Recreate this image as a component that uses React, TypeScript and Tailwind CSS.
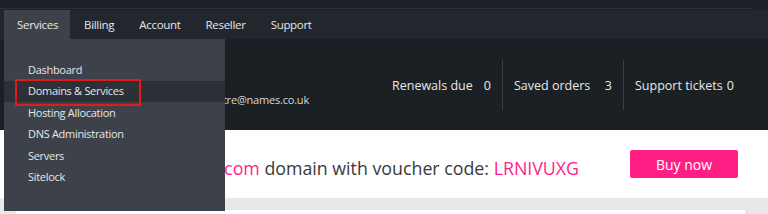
import React from "react";

export default function App() {
  const menu = [
    "Dashboard",
    "Domains & Services",
    "Hosting Allocation",
    "DNS Administration",
    "Servers",
    "Sitelock",
  ];
  const nav = ["Billing", "Account", "Reseller", "Support"];
  return (
    <div className="relative w-full h-[214px] overflow-hidden bg-[#e8e8e8] font-['Open_Sans',sans-serif]">
      {/* top strip */}
      <div className="h-[10px] bg-[#1e2228]">
        <div className="h-[9px] mr-[16px] border-b border-[#2a2f36]" />
      </div>
      {/* nav */}
      <div className="h-[29px] bg-[#22272e] flex pl-[4px] text-[11.5px] tracking-[-0.3px] text-[#e6e6e6]">
        <div className="w-[66px] bg-[#3d424a] flex items-center pl-[13px]">Services</div>
        <div className="flex items-center gap-[25px] pl-[14px]">
          {nav.map((n) => (
            <span key={n}>{n}</span>
          ))}
        </div>
      </div>
      {/* dark main */}
      <div className="h-[91px] bg-[#1b2024] flex items-center">
        <div className="w-[309px] pt-[32px] text-right text-[11px] tracking-[-0.2px] text-[#d8d8d8]">
          webcentre@names.co.uk
        </div>
        <div className="ml-auto mr-[23px] flex h-[50px] text-[12.5px] text-[#e8e8e8]">
          <div className="w-[121px] flex items-center justify-between px-[11px] pt-[3px]">
            <span>Renewals due</span>
            <span>0</span>
          </div>
          <div className="w-[121px] flex items-center justify-between px-[11px] pt-[3px] border-l border-[#3a3f45]">
            <span>Saved orders</span>
            <span>3</span>
          </div>
          <div className="w-[122px] flex items-center justify-between px-[11px] pt-[3px] border-l border-[#3a3f45]">
            <span>Support tickets</span>
            <span>0</span>
          </div>
        </div>
      </div>
      {/* banner */}
      <div className="h-[68px] bg-white flex items-center justify-end pr-[30px]">
        <div className="text-[17.8px] text-[#3a3a3a] pt-[9px] whitespace-nowrap">
          Register a .<span className="text-[#ff1f8a]">com</span> domain with voucher code:{" "}
          <span className="text-[#ff1f8a]">LRNIVUXG</span>
        </div>
        <button className="ml-[51px] w-[108px] h-[28px] bg-[#ff1f84] rounded-[2px] text-white text-[14px]">
          Buy now
        </button>
      </div>
      {/* gray area */}
      <div className="h-[16px] bg-[#e8e8e8] pt-[12px] pl-[16px] pr-[23px]">
        <div className="h-[4px] bg-white" />
      </div>

      {/* dropdown overlay */}
      <div className="absolute left-[4px] top-[39px] w-[221px] h-[172px] bg-[#3d424a] pt-[20px] text-[11px] tracking-[-0.3px] text-[#e6e6e6]">
        {menu.map((m) => (
          <div
            key={m}
            className={
              "h-[21.5px] flex items-center pl-[24px] " +
              (m === "Domains & Services" ? "bg-[#2c3037]" : "")
            }
          >
            {m}
          </div>
        ))}
      </div>
      {/* red annotation box */}
      <div className="absolute left-[15px] top-[79px] w-[126px] h-[27px] border-2 border-[#e3191c]" />
    </div>
  );
}
